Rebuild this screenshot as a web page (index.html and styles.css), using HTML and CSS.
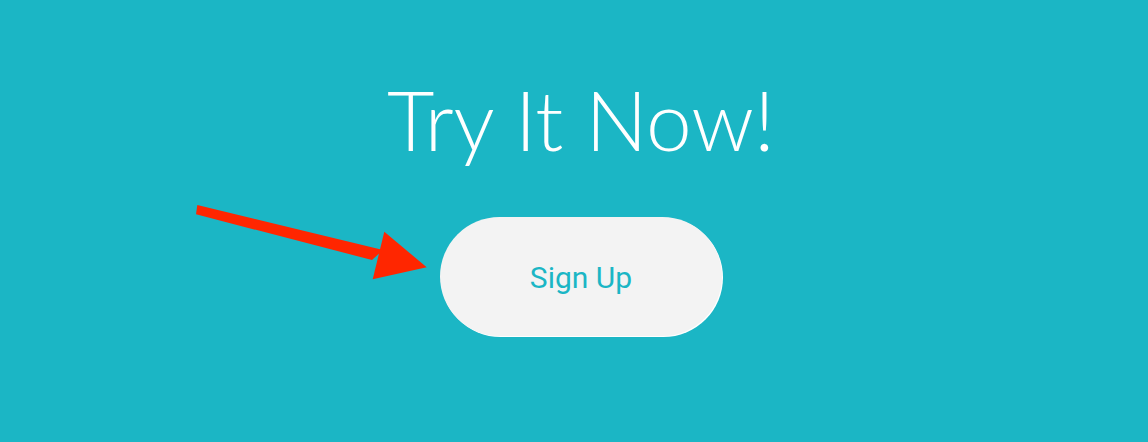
FILE: index.html
```html
<!DOCTYPE html>
<html>
<head>
<meta charset="utf-8">
<link rel="stylesheet" href="styles.css">
</head>
<body>
<main class="hero">
  <h1 class="title">Try It Now!</h1>
  <div class="cta">
    <svg class="arrow" width="240" height="90" viewBox="0 0 240 90">
      <polygon fill="#ff2600" points="1.3,0 -0.0,9.3 176,55 187,45"/>
      <polygon fill="#ff2600" points="188.3,26.7 230.7,62.3 176.7,74.3"/>
    </svg>
    <a class="btn" href="#">Sign Up</a>
  </div>
</main>
</body>
</html>
```
FILE: styles.css
```css
html, body {
  margin: 0;
  padding: 0;
  height: 100%;
}
body {
  background: #1bb6c5;
  font-family: "Lato", "Open Sans", sans-serif;
}
.hero {
  display: flex;
  flex-direction: column;
  align-items: center;
  padding-top: 71px;
  padding-left: 14px;
}
.title {
  margin: 0;
  color: #fff;
  font-weight: 300;
  font-size: 82px;
  line-height: 96px;
  letter-spacing: 0;
}
.cta {
  position: relative;
  margin-top: 50px;
}
.btn {
  display: flex;
  align-items: center;
  justify-content: center;
  width: 282px;
  height: 119px;
  border-radius: 60px;
  background: #f3f3f3;
  box-shadow: 1px 1px 0 #ffffff;
  color: #1bb6c5;
  text-decoration: none;
  font-family: "Roboto", "Inter", sans-serif;
  font-size: 30px;
  padding-top: 2px;
  box-sizing: border-box;
}
.arrow {
  position: absolute;
  left: -244px;
  top: -12px;
}
```
